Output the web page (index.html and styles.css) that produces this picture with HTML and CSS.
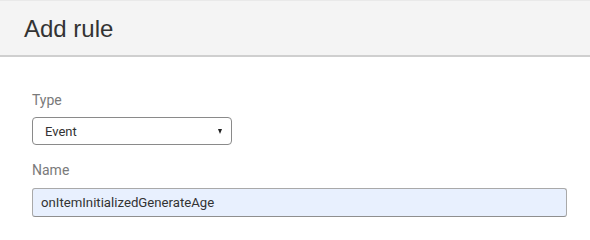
FILE: index.html
```html
<!DOCTYPE html>
<html>
<head>
<meta charset="utf-8">
<link rel="stylesheet" href="styles.css">
</head>
<body>
<div class="panel">
  <header class="panel-header">
    <h1 class="title">Add rule</h1>
  </header>
  <form class="panel-body">
    <div class="field">
      <label class="field-label">Type</label>
      <div class="select">
        <span class="select-value">Event</span>
        <span class="select-arrow"></span>
      </div>
    </div>
    <div class="field">
      <label class="field-label">Name</label>
      <div class="input">onItemInitializedGenerateAge</div>
    </div>
  </form>
</div>
</body>
</html>
```

FILE: styles.css
```css
html, body {
  margin: 0;
  padding: 0;
  background: #ffffff;
}

body {
  font-family: Roboto, "Liberation Sans", Arial, sans-serif;
  color: #333333;
}

.panel {
  width: 590px;
}

.panel-header {
  box-sizing: border-box;
  height: 57px;
  background: #f4f4f4;
  border-top: 1px solid #e9e9e9;
  border-bottom: 2px solid #cfcfcf;
  padding: 16px 0 0 24px;
}

.title {
  margin: 0;
  font-family: "Liberation Sans", Arial, sans-serif;
  font-weight: normal;
  font-size: 24px;
  line-height: 24px;
  color: #333333;
}

.panel-body {
  display: flex;
  flex-direction: column;
  padding: 35px 23px 0 32px;
}

.field {
  display: flex;
  flex-direction: column;
}

.field + .field {
  margin-top: 17px;
}

.field-label {
  font-size: 14px;
  line-height: 16px;
  color: #7a7a7a;
  margin-bottom: 9px;
}

.field + .field .field-label {
  margin-bottom: 10px;
}

.select {
  box-sizing: border-box;
  width: 200px;
  height: 28px;
  border: 1px solid #8a8a8a;
  border-radius: 4px;
  background: #ffffff;
  display: flex;
  align-items: center;
  justify-content: space-between;
  padding: 0 9px 0 12px;
}

.select-value {
  font-size: 13px;
  color: #333333;
}

.select-arrow {
  width: 0;
  height: 0;
  border-left: 2.5px solid transparent;
  border-right: 2.5px solid transparent;
  border-top: 5px solid #222222;
}

.input {
  box-sizing: border-box;
  height: 29px;
  border: 1px solid #a9a9a9;
  border-bottom-color: #8f8f8f;
  border-radius: 3px;
  background: #e8f0fe;
  display: flex;
  align-items: center;
  padding: 0 8px;
  font-size: 13.2px;
  color: #333333;
}
```
